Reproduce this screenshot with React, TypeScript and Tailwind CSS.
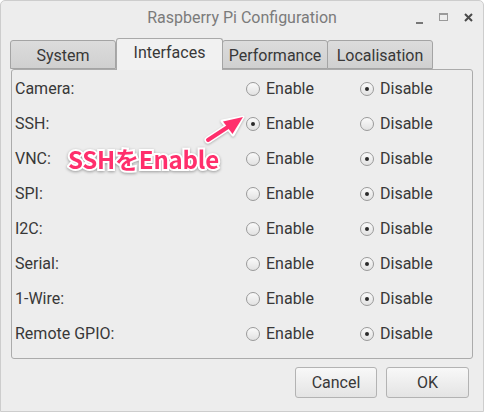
import React from "react";

const rows: { label: string; enabled: boolean }[] = [
  { label: "Camera:", enabled: false },
  { label: "SSH:", enabled: true },
  { label: "VNC:", enabled: false },
  { label: "SPI:", enabled: false },
  { label: "I2C:", enabled: false },
  { label: "Serial:", enabled: false },
  { label: "1-Wire:", enabled: false },
  { label: "Remote GPIO:", enabled: false },
];

function Radio({ checked, label }: { checked: boolean; label: string }) {
  return (
    <div className="flex items-center">
      <div className="w-[14px] h-[14px] rounded-full border border-[#9a9a9a] bg-gradient-to-b from-[#fafafa] to-[#e2e2e2] flex items-center justify-center">
        {checked && <div className="w-[4px] h-[4px] rounded-full bg-[#2a2a2a]" />}
      </div>
      <span className="ml-[6px]">{label}</span>
    </div>
  );
}

const tabs = ["System", "Interfaces", "Performance", "Localisation"];

export default function App() {
  return (
    <div className="w-[484px] h-[412px] bg-[#ededed] border border-[#cdcdcd] rounded-t-[5px] flex flex-col relative text-[#383838] [font-family:Roboto,'Liberation_Sans',sans-serif] text-[16px] overflow-hidden">
      {/* title bar */}
      <div className="h-[36px] relative flex items-start justify-center pt-[5px] shrink-0">
        <span className="text-[#7b7b7b] text-[16px]">Raspberry Pi Configuration</span>
        <div className="absolute right-[10px] top-[12px] flex items-start gap-[16px]">
          <div className="w-[7px] h-[2px] bg-[#777] mt-[9px]" />
          <div className="w-[9px] h-[8px] border border-[#9a9a9a] border-t-2" />
          <svg width="9" height="9" viewBox="0 0 9 9">
            <path d="M1 1 L8 8 M8 1 L1 8" stroke="#4a4a4a" strokeWidth="2" />
          </svg>
        </div>
      </div>
      {/* tabs */}
      <div className="h-[32px] flex items-end pl-[9px] shrink-0 relative z-10">
        {tabs.map((t) => {
          const active = t === "Interfaces";
          return active ? (
            <div
              key={t}
              className="w-[107px] h-[32px] -mb-px flex items-center justify-center border border-b-0 border-[#a9a9a9] rounded-t-[3px] bg-[#f1f1f1] pb-[3px]"
            >
              {t}
            </div>
          ) : (
            <div
              key={t}
              className="w-[106px] h-[29px] -ml-px first:ml-0 flex items-center justify-center border border-[#a4a4a4] rounded-t-[3px] bg-gradient-to-b from-[#dcdcdc] to-[#d0d0d0] pt-[2px]"
            >
              {t}
            </div>
          );
        })}
      </div>
      {/* panel */}
      <div className="mx-[10px] h-[290px] border border-[#ababab] rounded-[3px] bg-[#ededed] pt-[1px] shrink-0">
        {rows.map((r) => (
          <div key={r.label} className="h-[35px] flex items-center">
            <span className="pl-[3px] w-[234px]">{r.label}</span>
            <div className="w-[114px]">
              <Radio checked={r.enabled} label="Enable" />
            </div>
            <Radio checked={!r.enabled} label="Disable" />
          </div>
        ))}
      </div>
      {/* buttons */}
      <div className="flex justify-end gap-[9px] pr-[14px] pt-[8px]">
        <button className="w-[82px] h-[31px] border border-[#b3b3b3] rounded-[3px] bg-gradient-to-b from-[#f8f8f8] to-[#e4e4e4] text-[#383838]">
          Cancel
        </button>
        <button className="w-[83px] h-[31px] border border-[#b3b3b3] rounded-[3px] bg-gradient-to-b from-[#f8f8f8] to-[#e4e4e4] text-[#383838]">
          OK
        </button>
      </div>

      {/* annotation */}
      <svg className="absolute left-[197px] top-[107px]" width="52" height="40" viewBox="0 0 52 40">
        <g filter="drop-shadow(0 1px 1px rgba(0,0,0,0.25))">
          <path d="M10 32 L33 17" stroke="white" strokeWidth="7" strokeLinecap="round" />
          <path d="M45 9 L24 13 L35 27 Z" fill="white" stroke="white" strokeWidth="3" strokeLinejoin="round" />
          <path d="M10 32 L33 17" stroke="#ff2f6c" strokeWidth="4" strokeLinecap="round" />
          <path d="M45 9 L25 13.5 L34.5 26 Z" fill="#ff2f6c" />
        </g>
      </svg>
      <div className="absolute left-[67px] top-[146px] text-[24px] font-bold text-[#ff2f6c] leading-none [font-family:'Noto_Sans_CJK_JP','Noto_Sans',sans-serif] [-webkit-text-stroke:4px_white] [paint-order:stroke_fill] drop-shadow-[0_1px_1.5px_rgba(0,0,0,0.35)] tracking-[-0.2px]">
        SSHをEnable
      </div>
    </div>
  );
}
